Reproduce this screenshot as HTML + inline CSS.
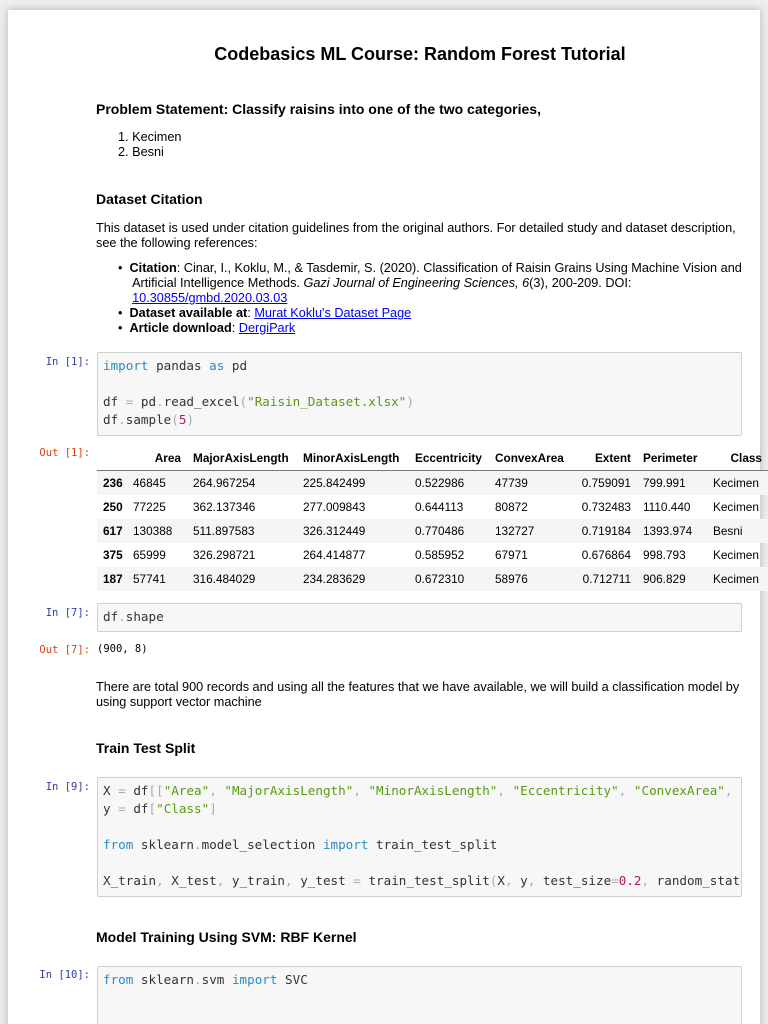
<!DOCTYPE html>
<html><head><meta charset="utf-8"><style>
html,body{margin:0;width:768px;height:1024px;overflow:hidden}
body{background:#eee;font-family:"Liberation Sans",sans-serif;color:#000;position:relative}
.card{position:absolute;left:8px;top:10px;width:752px;height:1030px;background:#fff;box-shadow:0 0 8px rgba(0,0,0,.25)}
.a{position:absolute;white-space:nowrap}
.t{font-size:12.7px;line-height:15px}
.h{font-size:14px;font-weight:bold}
.code{position:absolute;left:97px;width:645px;background:#f7f7f7;border:1px solid #cfcfcf;border-radius:2px;overflow:hidden;font-family:"DejaVu Sans Mono",monospace;font-size:12.6px;line-height:18px;color:#333;white-space:pre;padding:4px 5px;box-sizing:border-box}
.pin{position:absolute;font-family:"DejaVu Sans Mono",monospace;font-size:10.5px;color:#303f9f;text-align:right;width:90px;left:0}
.pout{position:absolute;font-family:"DejaVu Sans Mono",monospace;font-size:10.5px;color:#d84315;text-align:right;width:90px;left:0}
.k{color:#2a8bc4}.s{color:#5a9a13}.n{color:#b0196b}.o{color:#aaa}
a{color:#00e;text-decoration:underline}
table{position:absolute;left:97px;top:446px;border-collapse:collapse;font-size:11.8px;table-layout:fixed;width:671px}
td,th{padding:0 0 0 6px;height:24px;text-align:left;white-space:nowrap;overflow:hidden}
thead th{text-align:left;border-bottom:1px solid #777}
tbody tr:nth-child(odd){background:#f5f5f5}
tbody th{border:none;text-align:left}
.r{text-align:right!important;padding:0 6px 0 0}
</style></head><body>
<div class="card"></div>
<div class="a" style="left:0;width:840px;text-align:center;top:44px;font-size:18px;font-weight:bold">Codebasics ML Course: Random Forest Tutorial</div>
<div class="a h" style="left:96px;top:101px">Problem Statement: Classify raisins into one of the two categories,</div>
<div class="a t" style="left:118px;top:130px">1. Kecimen<br>2. Besni</div>
<div class="a h" style="left:96px;top:191px">Dataset Citation</div>
<div class="a t" style="left:96px;top:221px">This dataset is used under citation guidelines from the original authors. For detailed study and dataset description,<br>see the following references:</div>
<div class="a t" style="left:118px;top:261px">•&nbsp; <b>Citation</b>: Cinar, I., Koklu, M., &amp; Tasdemir, S. (2020). Classification of Raisin Grains Using Machine Vision and<br>&nbsp;&nbsp;&nbsp;&nbsp;Artificial Intelligence Methods. <i>Gazi Journal of Engineering Sciences, 6</i>(3), 200-209. DOI:<br>&nbsp;&nbsp;&nbsp;&nbsp;<a>10.30855/gmbd.2020.03.03</a><br>•&nbsp; <b>Dataset available at</b>: <a>Murat Koklu's Dataset Page</a><br>•&nbsp; <b>Article download</b>: <a>DergiPark</a></div>
<div class="pin" style="top:356px">In [1]:</div>
<div class="code" style="top:352px;height:84px"><span class="k">import</span> pandas <span class="k">as</span> pd

df <span class="o">=</span> pd<span class="o">.</span>read_excel<span class="o">(</span><span class="s">"Raisin_Dataset.xlsx"</span><span class="o">)</span>
df<span class="o">.</span>sample<span class="o">(</span><span class="n">5</span><span class="o">)</span></div>
<div class="pout" style="top:447px">Out [1]:</div>
<table><colgroup><col style="width:30px"><col style="width:60px"><col style="width:110px"><col style="width:112px"><col style="width:80px"><col style="width:78px"><col style="width:70px"><col style="width:70px"><col style="width:61px"></colgroup>
<thead><tr><th></th><th class="r">Area</th><th>MajorAxisLength</th><th>MinorAxisLength</th><th>Eccentricity</th><th>ConvexArea</th><th class="r">Extent</th><th>Perimeter</th><th class="r">Class</th></tr></thead>
<tbody>
<tr><th>236</th><td>46845</td><td>264.967254</td><td>225.842499</td><td>0.522986</td><td>47739</td><td class="r">0.759091</td><td>799.991</td><td>Kecimen</td></tr>
<tr><th>250</th><td>77225</td><td>362.137346</td><td>277.009843</td><td>0.644113</td><td>80872</td><td class="r">0.732483</td><td>1110.440</td><td>Kecimen</td></tr>
<tr><th>617</th><td>130388</td><td>511.897583</td><td>326.312449</td><td>0.770486</td><td>132727</td><td class="r">0.719184</td><td>1393.974</td><td>Besni</td></tr>
<tr><th>375</th><td>65999</td><td>326.298721</td><td>264.414877</td><td>0.585952</td><td>67971</td><td class="r">0.676864</td><td>998.793</td><td>Kecimen</td></tr>
<tr><th>187</th><td>57741</td><td>316.484029</td><td>234.283629</td><td>0.672310</td><td>58976</td><td class="r">0.712711</td><td>906.829</td><td>Kecimen</td></tr>
</tbody></table>
<div class="pin" style="top:607px">In [7]:</div>
<div class="code" style="top:603px;height:29px">df<span class="o">.</span>shape</div>
<div class="pout" style="top:644px">Out [7]:</div>
<div class="a" style="left:97px;top:643px;font-family:'DejaVu Sans Mono',monospace;font-size:10.5px">(900, 8)</div>
<div class="a t" style="left:96px;top:680px">There are total 900 records and using all the features that we have available, we will build a classification model by<br>using support vector machine</div>
<div class="a h" style="left:96px;top:740px">Train Test Split</div>
<div class="pin" style="top:781px">In [9]:</div>
<div class="code" style="top:777px;height:120px">X <span class="o">=</span> df<span class="o">[[</span><span class="s">"Area"</span><span class="o">,</span> <span class="s">"MajorAxisLength"</span><span class="o">,</span> <span class="s">"MinorAxisLength"</span><span class="o">,</span> <span class="s">"Eccentricity"</span><span class="o">,</span> <span class="s">"ConvexArea"</span><span class="o">,</span>
y <span class="o">=</span> df<span class="o">[</span><span class="s">"Class"</span><span class="o">]</span>

<span class="k">from</span> sklearn<span class="o">.</span>model_selection <span class="k">import</span> train_test_split

X_train<span class="o">,</span> X_test<span class="o">,</span> y_train<span class="o">,</span> y_test <span class="o">=</span> train_test_split<span class="o">(</span>X<span class="o">,</span> y<span class="o">,</span> test_size<span class="o">=</span><span class="n">0.2</span><span class="o">,</span> random_state</div>
<div class="a h" style="left:96px;top:929px">Model Training Using SVM: RBF Kernel</div>
<div class="pin" style="top:969px">In [10]:</div>
<div class="code" style="top:966px;height:80px"><span class="k">from</span> sklearn<span class="o">.</span>svm <span class="k">import</span> SVC</div>
</body></html>
